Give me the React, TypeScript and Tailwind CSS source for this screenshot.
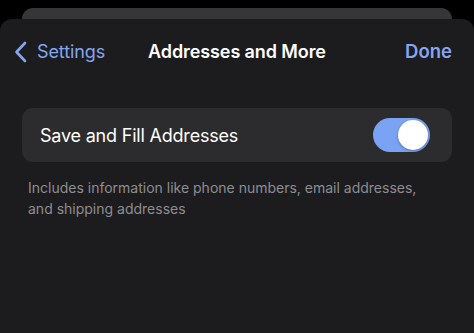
export default function App() {
  return (
    <div className="w-[474px] h-[333px] bg-black overflow-hidden flex flex-col" style={{ fontFamily: 'Inter, "Noto Sans", sans-serif' }}>
      {/* sheet behind */}
      <div className="mx-[22px] mt-[8px] h-[11px] shrink-0 rounded-t-[12px] bg-[#363638]" />
      {/* main sheet */}
      <div className="flex-1 rounded-t-[12px] bg-[#1c1c1e] flex flex-col">
        <div className="h-[62px] grid grid-cols-[1fr_auto_1fr] items-center px-[14px] pt-[3px]">
          <div className="flex items-center gap-[10px] text-[#84a6ee]">
            <svg width="13" height="22" viewBox="0 0 13 22" fill="none">
              <path d="M11 2 L2.5 11 L11 20" stroke="currentColor" strokeWidth="2.6" strokeLinecap="round" strokeLinejoin="round" />
            </svg>
            <span className="text-[18px] tracking-[-0.1px]">Settings</span>
          </div>
          <span className="text-[18px] font-semibold text-white tracking-[-0.1px]">Addresses and More</span>
          <span className="justify-self-end text-[18.5px] font-semibold text-[#84a6ee] mr-[8px]">Done</span>
        </div>
        <div className="mx-[22px] mt-[27px] h-[54px] rounded-[11px] bg-[#2c2c2e] flex items-center justify-between pl-[18px] pr-[22px]">
          <span className="text-[18px] text-white tracking-[-0.2px]">Save and Fill Addresses</span>
          <div className="w-[57px] h-[34px] rounded-full bg-[#7ba3f3] flex items-center justify-end pr-[2px]">
            <div className="w-[30px] h-[30px] rounded-full bg-white shadow-[0_1px_3px_rgba(0,0,0,0.3)]" />
          </div>
        </div>
        <p className="mx-[28px] mt-[15px] text-[14px] leading-[21px] text-[#8d8d92]">
          Includes information like phone numbers, email addresses,<br />and shipping addresses
        </p>
      </div>
    </div>
  );
}
